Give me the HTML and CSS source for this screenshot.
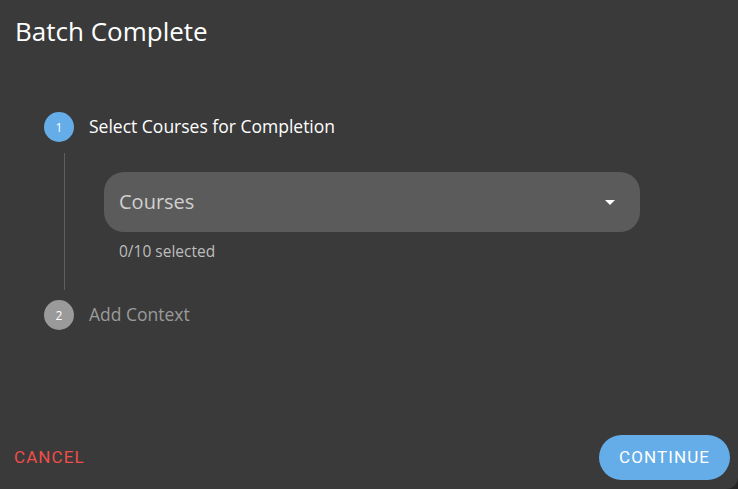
FILE: index.html
```html
<!DOCTYPE html>
<html>
<head>
<meta charset="utf-8">
<link rel="stylesheet" href="styles.css">
</head>
<body>
<div class="dialog">
  <h1 class="title">Batch Complete</h1>
  <div class="stepper">
    <div class="step-head">
      <span class="badge badge-active">1</span>
      <span class="step-label">Select Courses for Completion</span>
    </div>
    <div class="step-body">
      <div class="select">
        <span class="select-text">Courses</span>
        <svg class="caret" width="10" height="5" viewBox="0 0 10 5"><path d="M0 0 L10 0 L5 5 Z" fill="#fff"/></svg>
      </div>
      <div class="hint">0/10 selected</div>
    </div>
    <div class="step-head">
      <span class="badge badge-idle">2</span>
      <span class="step-label step-label-idle">Add Context</span>
    </div>
  </div>
  <div class="actions">
    <button class="btn-cancel">CANCEL</button>
    <button class="btn-continue">CONTINUE</button>
  </div>
</div>
</body>
</html>
```
FILE: styles.css
```css
html, body {
  margin: 0;
  padding: 0;
  background: #262626;
}
.dialog {
  width: 738px;
  height: 489px;
  background: #3a3a3a;
  border-bottom-right-radius: 12px;
  display: flex;
  flex-direction: column;
  font-family: "Open Sans", "DejaVu Sans", sans-serif;
  color: #fff;
  box-sizing: border-box;
}
.title {
  margin: 0;
  padding: 15px 0 1px 15px;
  font-size: 26px;
  line-height: 32px;
  font-weight: 400;
  color: #fff;
}
.stepper {
  margin-top: 64px;
  display: flex;
  flex-direction: column;
}
.step-head {
  display: flex;
  align-items: center;
  height: 30px;
  padding-left: 44px;
}
.badge {
  width: 30px;
  height: 30px;
  border-radius: 50%;
  display: flex;
  align-items: center;
  justify-content: center;
  font-size: 12px;
  color: #fff;
  flex: none;
}
.badge-active { background: #64ade8; }
.badge-idle { background: #9a9a9a; }
.step-label {
  margin-left: 15px;
  padding-bottom: 2px;
  font-size: 17.5px;
  color: #fff;
}
.step-label-idle { color: #9b9b9b; }
.step-body {
  margin: 11px 0 10px 64px;
  border-left: 1px solid #5e5e5e;
  padding: 19px 0 29px 39px;
}
.select {
  width: 536px;
  height: 60px;
  border-radius: 20px;
  background: #5b5b5b;
  display: flex;
  align-items: center;
  justify-content: space-between;
  padding: 0 25px 0 15px;
  box-sizing: border-box;
}
.select-text {
  font-size: 20px;
  padding-bottom: 2px;
  color: #d0d0d0;
}
.caret { display: block; }
.hint {
  margin-top: 9px;
  padding-left: 15px;
  font-size: 15.5px;
  line-height: 20px;
  color: #bdbdbd;
}
.actions {
  margin-top: auto;
  display: flex;
  align-items: center;
  justify-content: space-between;
  padding: 0 8px 9px 14px;
}
.btn-cancel, .btn-continue {
  font-family: Roboto, "Liberation Sans", sans-serif;
  font-size: 17px;
  border: none;
  cursor: pointer;
  letter-spacing: 1.1px;
  padding-bottom: 2px;
}
.btn-cancel {
  background: none;
  color: #ef4e4a;
  padding-left: 0;
  padding-right: 0;
  padding-top: 0;
}
.btn-continue {
  background: #64ade8;
  color: #fff;
  width: 131px;
  height: 45px;
  border-radius: 23px;
  padding-left: 0;
  padding-right: 0;
  padding-top: 0;
}
```
